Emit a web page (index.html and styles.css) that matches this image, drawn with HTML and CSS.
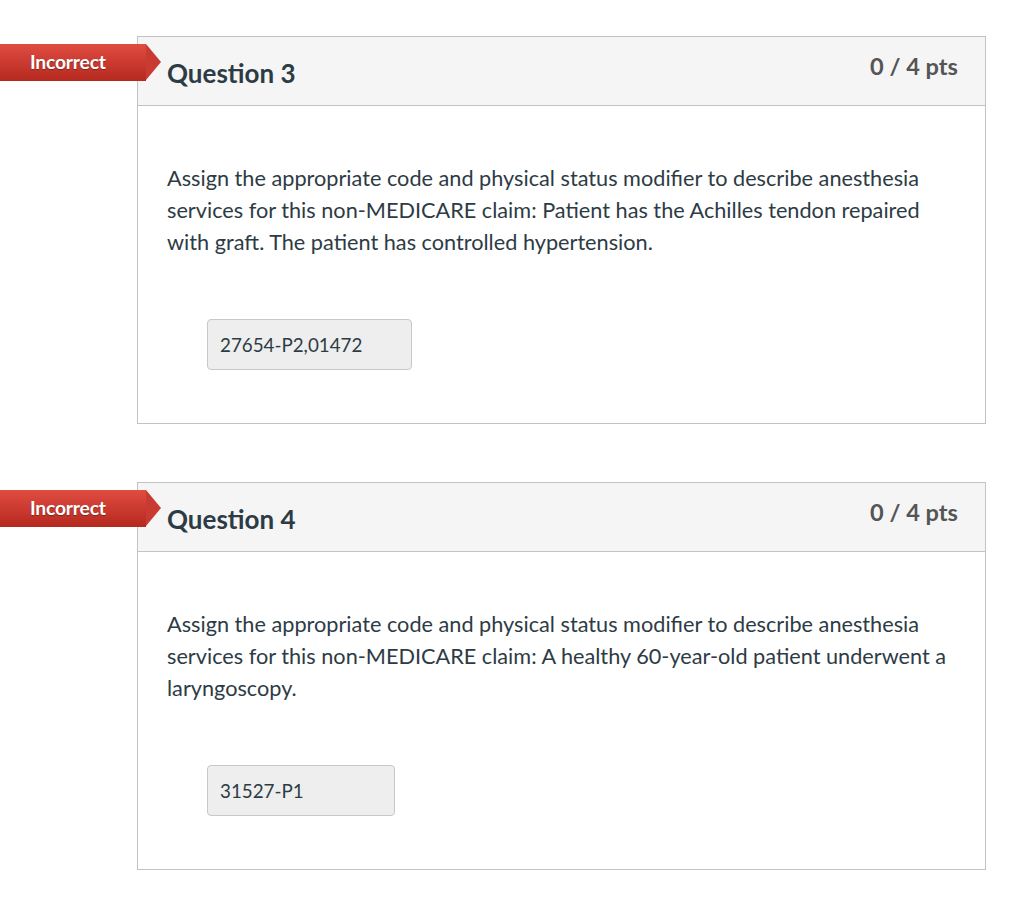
FILE: index.html
```html
<!DOCTYPE html>
<html>
<head>
<meta charset="utf-8">
<link rel="stylesheet" href="styles.css">
</head>
<body>
<div class="page">
  <div class="question">
    <div class="flag">Incorrect</div>
    <div class="q-header">
      <h2 class="q-title">Question 3</h2>
      <div class="q-points">0 / 4 pts</div>
    </div>
    <div class="q-body">
      <p class="q-text">Assign the appropriate code and physical status modifier to describe anesthesia services for this non-MEDICARE claim: Patient has the Achilles tendon repaired with graft. The patient has controlled hypertension.</p>
      <div class="answer answer-wide">27654-P2,01472</div>
    </div>
  </div>
  <div class="question">
    <div class="flag">Incorrect</div>
    <div class="q-header">
      <h2 class="q-title">Question 4</h2>
      <div class="q-points">0 / 4 pts</div>
    </div>
    <div class="q-body">
      <p class="q-text">Assign the appropriate code and physical status modifier to describe anesthesia services for this non-MEDICARE claim: A healthy 60-year-old patient underwent a laryngoscopy.</p>
      <div class="answer answer-narrow">31527-P1</div>
    </div>
  </div>
</div>
</body>
</html>
```

FILE: styles.css
```css
html, body {
  margin: 0;
  padding: 0;
  background: #fff;
}
body {
  font-family: Lato, "Open Sans", "Liberation Sans", sans-serif;
  color: #2d3b45;
}
.page {
  padding: 36px 0 0 137px;
  display: flex;
  flex-direction: column;
  gap: 58px;
}
.question {
  position: relative;
  width: 847px;
  border: 1px solid #c3c3c3;
}
.flag {
  position: absolute;
  left: -138px;
  top: 7px;
  width: 146px;
  height: 37px;
  background: linear-gradient(#e04c42, #b5291f);
  color: #fff;
  font-weight: bold;
  font-size: 19.3px;
  line-height: 36px;
  padding-left: 30px;
  box-sizing: border-box;
  text-shadow: 0 1px 1px rgba(0,0,0,0.35);
  letter-spacing: -0.2px;
}
.flag::after {
  content: "";
  position: absolute;
  right: -15px;
  top: 0;
  border-top: 18.5px solid transparent;
  border-bottom: 18.5px solid transparent;
  border-left: 15px solid #c93a30;
}
.q-header {
  display: flex;
  justify-content: space-between;
  align-items: flex-start;
  height: 68px;
  background: #f5f5f5;
  border-bottom: 1px solid #c3c3c3;
  padding: 0 27px 0 29px;
}
.q-title {
  margin: 0;
  font-size: 26px;
  font-weight: bold;
  line-height: 30px;
  padding-top: 21px;
  color: #2d3b45;
}
.q-points {
  font-size: 23.6px;
  font-weight: bold;
  color: #555;
  line-height: 28px;
  padding-top: 15px;
}
.q-body {
  padding: 56px 29px 53px 29px;
}
.q-text {
  margin: 0 0 61px 0;
  font-size: 21.7px;
  line-height: 32px;
  color: #2d3b45;
}
.answer {
  margin-left: 40px;
  height: 49px;
  border: 1px solid #c8c8c8;
  border-radius: 4px;
  background: #eeeeee;
  font-size: 18.8px;
  line-height: 49px;
  padding-left: 12px;
  color: #2d3b45;
}
.answer-wide { width: 191px; }
.answer-narrow { width: 174px; }
```
